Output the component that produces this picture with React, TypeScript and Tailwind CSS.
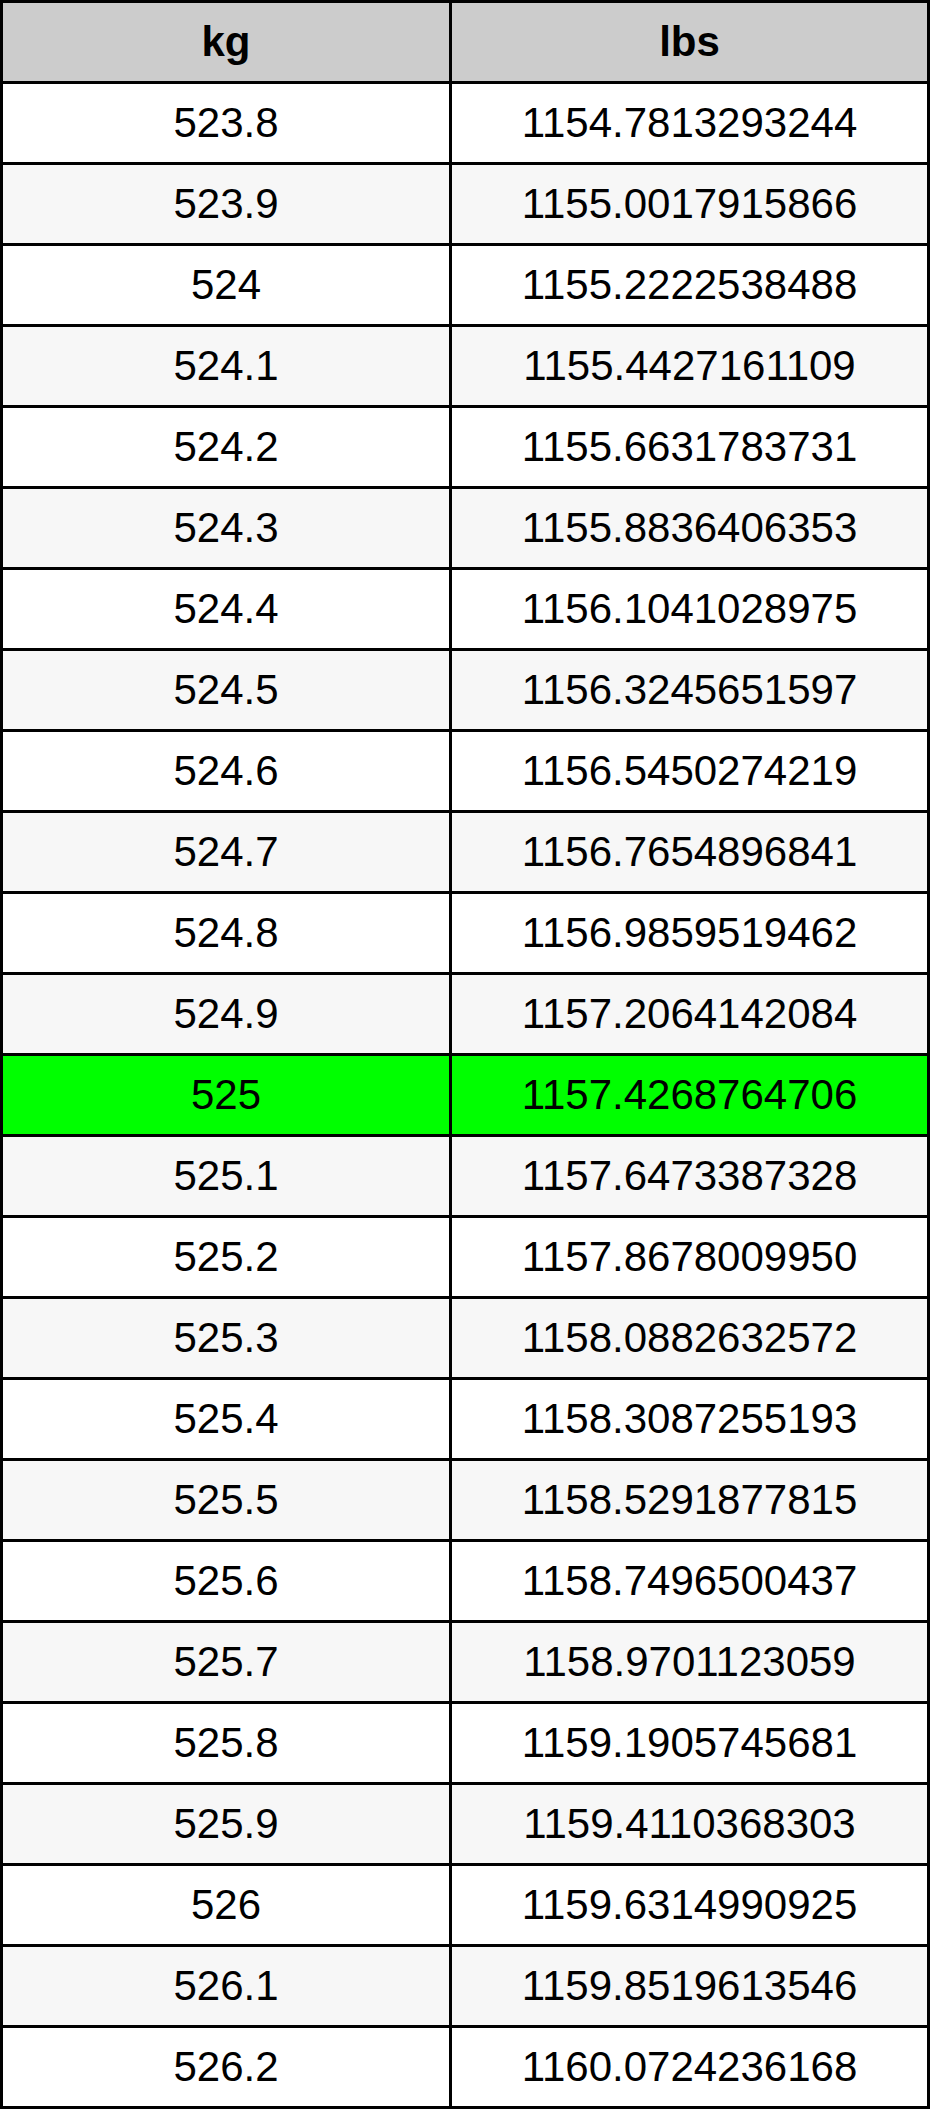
const rows: [string, string][] = [
  ["523.8", "1154.7813293244"],
  ["523.9", "1155.0017915866"],
  ["524", "1155.2222538488"],
  ["524.1", "1155.4427161109"],
  ["524.2", "1155.6631783731"],
  ["524.3", "1155.8836406353"],
  ["524.4", "1156.1041028975"],
  ["524.5", "1156.3245651597"],
  ["524.6", "1156.5450274219"],
  ["524.7", "1156.7654896841"],
  ["524.8", "1156.9859519462"],
  ["524.9", "1157.2064142084"],
  ["525", "1157.4268764706"],
  ["525.1", "1157.6473387328"],
  ["525.2", "1157.8678009950"],
  ["525.3", "1158.0882632572"],
  ["525.4", "1158.3087255193"],
  ["525.5", "1158.5291877815"],
  ["525.6", "1158.7496500437"],
  ["525.7", "1158.9701123059"],
  ["525.8", "1159.1905745681"],
  ["525.9", "1159.4110368303"],
  ["526", "1159.6314990925"],
  ["526.1", "1159.8519613546"],
  ["526.2", "1160.0724236168"],
];

export default function App() {
  return (
    <div className="bg-white font-['Liberation_Sans',Arial,sans-serif] text-black">
      <table className="w-[930px] table-fixed border-collapse text-center text-[42px] leading-none">
        <colgroup>
          <col className="w-[449px]" />
          <col />
        </colgroup>
        <thead>
          <tr className="h-[81px] bg-[#cccccc]">
            <th className="border-[3px] border-black font-bold">kg</th>
            <th className="border-[3px] border-black font-bold">lbs</th>
          </tr>
        </thead>
        <tbody>
          {rows.map(([kg, lbs], i) => {
            const bg =
              kg === "525"
                ? "bg-[#00ff00]"
                : i % 2 === 1
                  ? "bg-[#f7f7f7]"
                  : "bg-white";
            return (
              <tr key={kg} className={`h-[81px] ${bg}`}>
                <td className="border-[3px] border-black">{kg}</td>
                <td className="border-[3px] border-black">{lbs}</td>
              </tr>
            );
          })}
        </tbody>
      </table>
    </div>
  );
}
